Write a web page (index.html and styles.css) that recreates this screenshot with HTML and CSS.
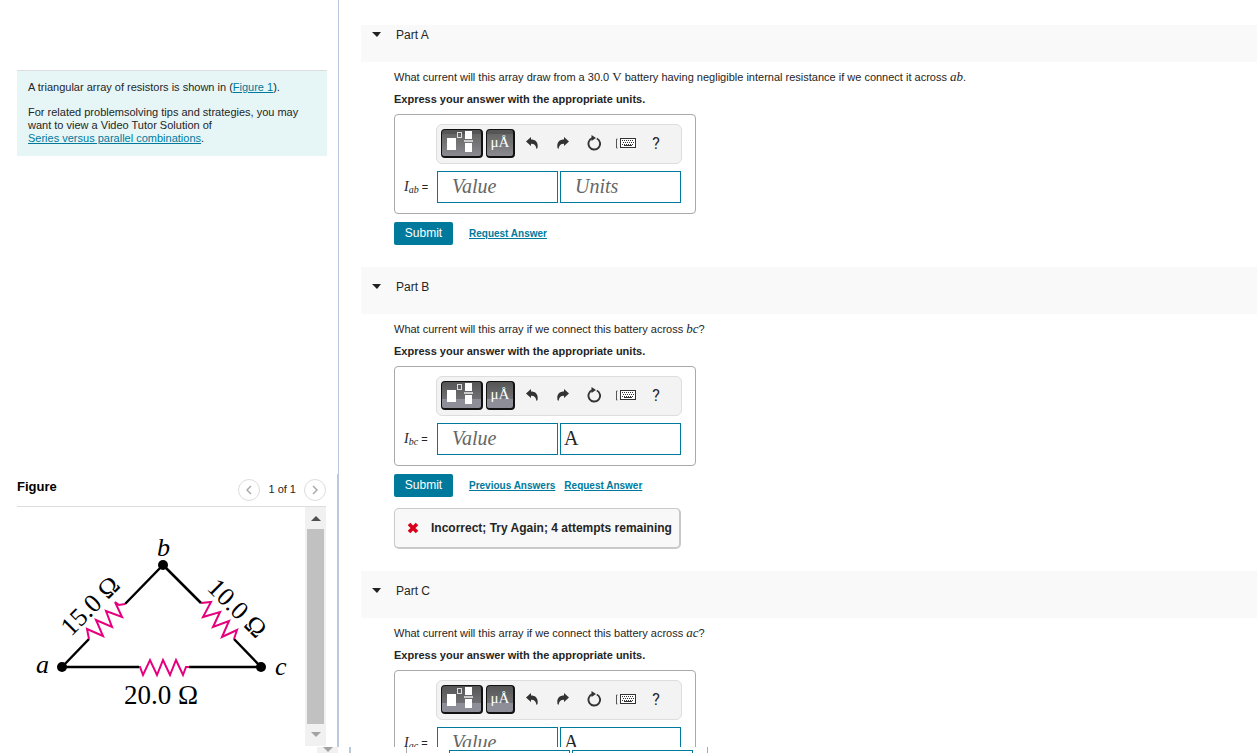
FILE: index.html
```html
<!DOCTYPE html>
<html lang="en">
<head>
	<meta charset="UTF-8">
	<title>Triangular array of resistors</title>
	<link rel="stylesheet" href="styles.css">
</head>
<body>
<svg class="defs" aria-hidden="true">
	<symbol id="i-template" viewBox="0 0 30 24">
		<rect x="0" y="7" width="9" height="12" fill="#fff"/>
		<rect x="10.500" y="1.500" width="4" height="5" fill="none" stroke="#ddd"/>
		<rect x="18" y="0" width="7" height="8" fill="#fff"/>
		<rect x="17" y="9" width="9" height="2" fill="#ccc"/>
		<rect x="18" y="12" width="7" height="9" fill="#fff"/>
	</symbol>
	<symbol id="i-undo" viewBox="0 0 12 12">
		<path d="M0 4.500 5 0v2.600c4.500 0 7.500 2.700 6.500 8.400l-1 1C10 8.500 8.500 6.800 5 6.800V9z" fill="#333"/>
	</symbol>
	<symbol id="i-redo" viewBox="0 0 12 12">
		<path d="M12 4.500 7 0v2.600C2.500 2.600-.5 5.300.5 11l1 1c.5-3.500 2-5.200 5.500-5.200V9z" fill="#333"/>
	</symbol>
	<symbol id="i-reset" viewBox="0 0 14 16">
		<path d="M9.800 3.500A5.800 5.800 0 1 1 5.500 3.200" fill="none" stroke="#333" stroke-width="1.900"/>
		<path d="M4.500 0 9 3 4.500 6z" fill="#333"/>
	</symbol>
	<symbol id="i-keys" viewBox="0 0 21 11">
		<path d="M2.500 1h-1v9h1" fill="none" stroke="#555"/>
		<rect x="5.500" y=".5" width="15" height="9" fill="#fff" stroke="#333"/>
		<path d="M7 2.500h12M8 4.500h11" stroke="#333" stroke-dasharray="1 1"/>
		<path d="M7 6.500h12" stroke="#333" stroke-dasharray="1 1"/>
		<path d="M9 7.500h8" stroke="#333"/>
	</symbol>
	<symbol id="i-cross" viewBox="0 0 12 12">
		<path d="M2 2l8 8M10 2l-8 8" stroke="#d9001b" stroke-width="3.600"/>
	</symbol>
</svg>

<div id="wrap">
	<div id="side">
		<div class="intro">
			<p>A triangular array of resistors is shown in (<a href="#figure">Figure 1</a>).</p>
			<p>For related problemsolving tips and strategies, you may want to view a Video Tutor Solution of <br><a href="#video">Series versus parallel combinations</a>.</p>
		</div>
		<div id="figure">
			<div class="fig-head">
				<h2>Figure</h2>
				<div class="pager">
					<button type="button" aria-label="Previous figure"><svg viewBox="0 0 6 8"><path d="M5 0 1 4l4 4"/></svg></button>
					<span>1 of 1</span>
					<button type="button" aria-label="Next figure"><svg viewBox="0 0 6 8"><path d="M1 0l4 4-4 4"/></svg></button>
				</div>
			</div>
			<div class="fig-body">
				<svg class="diagram" viewBox="0 0 288 239">
					<g class="wire">
						<path d="M45 160h77M172 160h72"/>
						<path d="M45 160l27-28M108 97l38-39"/>
						<path d="M146 58l38 38M217 132l27 28"/>
					</g>
					<g class="res">
						<path d="M122 160h1l3 8 7-15 7 15 6-15 7 15 6-15 7 15 3-8h3"/>
						<path d="M72 132l-2-10 16 7-7-16 16 7-6-16 16 6-7-15 4 3 6-1"/>
						<path d="M184 96l10-1-8 15 17-5-7 15 16-6-7 16 15-7-3 9"/>
					</g>
					<circle cx="45" cy="160" r="5"/>
					<circle cx="146" cy="58" r="5"/>
					<circle cx="244" cy="160" r="5"/>
					<text class="node" x="19" y="166">a</text>
					<text class="node" x="140" y="49">b</text>
					<text class="node" x="258" y="168">c</text>
					<text class="value" x="107" y="197">20.0 Ω</text>
					<text transform="translate(54 130) rotate(-45)">15.0 Ω</text>
					<text transform="translate(189 82) rotate(45)">10.0 Ω</text>
				</svg>
				<div class="bar">
					<i class="up"></i>
					<div class="thumb"></div>
					<i class="down"></i>
				</div>
			</div>
		</div>
	</div>

	<div id="main">
		<section class="part">
			<div class="part-head"><i class="caret"></i><h2>Part A</h2></div>
			<form class="part-body">
				<p>What current will this array draw from a 30.0 <span class="unit">V</span> battery having negligible internal resistance if we connect it across <em>ab</em>.</p>
				<p><b>Express your answer with the appropriate units.</b></p>
				<div class="answer">
					<div class="tools">
						<button type="button" class="dark wide" aria-label="Templates"><svg width="30" height="24"><use href="#i-template"/></svg></button>
						<button type="button" class="dark">μÅ</button>
						<button type="button" aria-label="Undo"><svg width="12" height="12"><use href="#i-undo"/></svg></button>
						<button type="button" aria-label="Redo"><svg width="12" height="12"><use href="#i-redo"/></svg></button>
						<button type="button" aria-label="Reset"><svg width="14" height="16"><use href="#i-reset"/></svg></button>
						<button type="button" aria-label="Keyboard"><svg width="21" height="11"><use href="#i-keys"/></svg></button>
						<button type="button">?</button>
					</div>
					<label for="val-a"><em>I<sub>ab</sub></em> =</label>
					<input type="text" id="val-a" placeholder="Value">
					<input type="text" placeholder="Units" aria-label="Units">
				</div>
				<div class="actions">
					<button type="button" class="submit">Submit</button>
					<a href="#request">Request Answer</a>
				</div>
			</form>
		</section>

		<section class="part">
			<div class="part-head"><i class="caret"></i><h2>Part B</h2></div>
			<form class="part-body">
				<p>What current will this array if we connect this battery across <em>bc</em>?</p>
				<p><b>Express your answer with the appropriate units.</b></p>
				<div class="answer">
					<div class="tools">
						<button type="button" class="dark split wide" aria-label="Templates"><svg width="30" height="24"><use href="#i-template"/></svg></button>
						<button type="button" class="dark split">μÅ</button>
						<button type="button" aria-label="Undo"><svg width="12" height="12"><use href="#i-undo"/></svg></button>
						<button type="button" aria-label="Redo"><svg width="12" height="12"><use href="#i-redo"/></svg></button>
						<button type="button" aria-label="Reset"><svg width="14" height="16"><use href="#i-reset"/></svg></button>
						<button type="button" aria-label="Keyboard"><svg width="21" height="11"><use href="#i-keys"/></svg></button>
						<button type="button">?</button>
					</div>
					<label for="val-b"><em>I<sub>bc</sub></em> =</label>
					<input type="text" id="val-b" placeholder="Value">
					<input type="text" class="filled" value="A" aria-label="Units">
				</div>
				<div class="actions">
					<button type="button" class="submit">Submit</button>
					<a href="#previous">Previous Answers</a>
					<a href="#request">Request Answer</a>
				</div>
				<div class="result"><svg width="12" height="12"><use href="#i-cross"/></svg>Incorrect; Try Again; 4 attempts remaining</div>
			</form>
		</section>

		<section class="part">
			<div class="part-head"><i class="caret"></i><h2>Part C</h2></div>
			<form class="part-body">
				<p>What current will this array if we connect this battery across <em>ac</em>?</p>
				<p><b>Express your answer with the appropriate units.</b></p>
				<div class="answer">
					<div class="tools">
						<button type="button" class="dark split wide" aria-label="Templates"><svg width="30" height="24"><use href="#i-template"/></svg></button>
						<button type="button" class="dark split">μÅ</button>
						<button type="button" aria-label="Undo"><svg width="12" height="12"><use href="#i-undo"/></svg></button>
						<button type="button" aria-label="Redo"><svg width="12" height="12"><use href="#i-redo"/></svg></button>
						<button type="button" aria-label="Reset"><svg width="14" height="16"><use href="#i-reset"/></svg></button>
						<button type="button" aria-label="Keyboard"><svg width="21" height="11"><use href="#i-keys"/></svg></button>
						<button type="button">?</button>
					</div>
					<label for="val-c"><em>I<sub>ac</sub></em> =</label>
					<input type="text" id="val-c" placeholder="Value">
					<input type="text" class="filled" value="A" aria-label="Units">
				</div>
			</form>
		</section>
	</div>
</div>

<!-- top edge of the next screen -->
<div id="next">
	<div class="next-bar"><i class="down"></i></div>
	<div class="next-line"></div>
	<div class="next-answer"><div></div><div></div></div>
</div>
</body>
</html>
```
FILE: styles.css
```css
*{
	margin:0; padding:0; box-sizing:border-box;
}
body{
	height:100vh;
	display:flex; flex-direction:column;
	overflow:hidden;
	background:#fff; color:#252525;
	font:11px/13px "Liberation Sans",Arial,sans-serif;
}
a{
	color:#007a9c;
}
button,input{
	font:inherit; color:inherit;
}
button{
	border:0; background:none;
}
em,.unit{
	font-family:"Liberation Serif",serif;
	font-size:13px; line-height:1;
}
.defs{
	position:absolute; width:0; height:0;
}
#wrap{
	flex:1; min-height:0;
	display:flex;
}

/* left pane */
#side{
	width:339px; flex:none;
	padding-top:70px;
	display:flex; flex-direction:column;
	border-right:1px solid #b8cadb;
}
.intro{
	margin:0 11px 0 17px; padding:10px 11px 11px;
	border-top:1px solid #ddd;
	background:#e6f6f7;
}
.intro p + p{
	margin-top:12px;
}
#figure{
	margin-top:auto; padding:0 11px 0 17px;
	border-right:1px solid #b8cadb;
}
.fig-head{
	height:33px;
	display:flex; justify-content:space-between;
	border-bottom:1px solid #ddd;
}
.fig-head h2{
	padding-top:5px;
	font-size:13px; line-height:16px; color:#000;
}
.pager{
	height:31px;
	display:flex; align-items:center; gap:8px;
}
.pager button{
	width:22px; height:22px;
	display:flex; align-items:center; justify-content:center;
	border:1px solid #ddd; border-radius:50%;
}
.pager svg{
	width:6px; height:8px;
	overflow:visible; fill:none; stroke:#aaa; stroke-width:1.5;
}
.fig-body{
	height:240px; padding-bottom:1px;
	display:flex;
}
.diagram{
	flex:1; min-width:0;
	font-family:"Liberation Serif",serif; font-size:26px;
}
.wire,.res{
	fill:none; stroke:#000; stroke-width:2.5;
}
.res{
	stroke:#e6007e; stroke-width:2;
}
.node{
	font-style:italic;
}
.value{
	font-size:27px;
}
.bar{
	width:21px; padding:9px 2px;
	display:flex; flex-direction:column; align-items:center; gap:8px;
	background:#f1f1f1;
}
.thumb{
	width:100%; flex:1;
	background:#c1c1c1;
}
.up,.down{
	border:5px solid transparent; border-top:0;
	border-bottom-color:#505050;
}
.down{
	border-bottom:0; border-top:5px solid #a3a3a3;
}

/* parts */
#main{
	flex:1; min-width:0;
	padding:25px 0 0 22px;
	overflow-y:auto; scrollbar-width:none;
}
.part-head{
	height:47px; padding:12px 11px;
	display:flex; gap:15px;
	background:#f9f9f9;
}
.part:first-child .part-head{
	height:37px; padding-top:2px;
}
.part-head h2{
	font-size:12px; font-weight:normal; line-height:16px;
}
.caret{
	align-self:flex-start;
	margin-top:5px;
	border:5px solid transparent; border-bottom:0;
	border-width:5px 4px 0 5px;
	border-top-color:#222;
}
.part-body{
	padding:8px 0 22px 33px;
}
.part-body p{
	height:14px; line-height:14px;
	margin-bottom:8px;
}
.answer{
	width:302px; height:100px;
	padding:9px 14px 9px 9px;
	display:grid; grid-template-columns:31px 1fr 1fr;
	grid-template-rows:40px 32px; gap:7px 2px;
	border:1px solid #a9a9a9; border-radius:4px;
}
.tools{
	grid-column:2 / 4;
	margin:0 -1px; padding:4px;
	display:flex; gap:3px;
	border:1px solid #ddd; border-radius:6px;
	background:#f3f3f3;
}
.tools button{
	width:28px; height:28px;
	display:flex; align-items:center; justify-content:center;
	font:16px Roboto,sans-serif;
}
.tools .dark{
	width:29px; height:29px;
	align-items:flex-start;
	padding-top:3px;
	border:1px solid #111; border-width:1px 2px 2px 1px; border-radius:4px;
	background:linear-gradient(#555 15%,#666 16%,#8a8a90);
	color:#fff;
	font:15px/18px "Liberation Serif",serif;
}
.tools .split{
	background:linear-gradient(#555,#707074 64%,#8e8e98 65%);
}
.tools .wide{
	width:42px; padding-top:1px;
}
.answer label{
	align-self:center;
	white-space:nowrap;
}
.answer em{
	font-size:14px;
}
.answer sub{
	font-size:10px; line-height:1;
	vertical-align:-2px;
}
.answer input{
	min-width:0; width:100%; height:32px;
	padding:0 14px 2px;
	border:1px solid #007a9c;
	font:20px "Liberation Serif",serif;
}
.answer .filled{
	padding:0 3px 2px;
}
.answer input::placeholder{
	color:#666; font-style:italic;
}
.actions{
	margin-top:8px;
	display:flex; align-items:center; gap:9px;
	font-size:10px; font-weight:bold;
}
.submit{
	width:59px; height:23px;
	margin-right:7px;
	border-radius:2px;
	background:#007a9c; color:#fff;
	font-size:12px; font-weight:normal;
}
.result{
	width:fit-content; height:41px;
	margin-top:11px; padding:0 7px 0 12px;
	display:flex; align-items:center; gap:12px;
	border:1px solid #c9c9c9; border-width:1px 2px 2px 1px;
	border-radius:5px;
	background:#f8f8f8;
	font-size:12px; font-weight:bold;
}

#next{
	height:6px; flex:none;
	display:flex;
	overflow:hidden;
}
.next-bar{
	width:21px; margin-left:317px;
	display:flex; justify-content:center;
	background:#f1f1f1;
}
.next-line{
	width:2px; margin-left:11px;
	background:#b8cadb;
}
.next-answer{
	width:302px; margin-left:55px; padding:3px 14px 0 42px;
	display:flex; gap:2px;
	border:1px solid #a9a9a9; border-width:0 1px;
}
.next-answer div{
	flex:1;
	border:1px solid #007a9c; border-bottom:0;
}
```
